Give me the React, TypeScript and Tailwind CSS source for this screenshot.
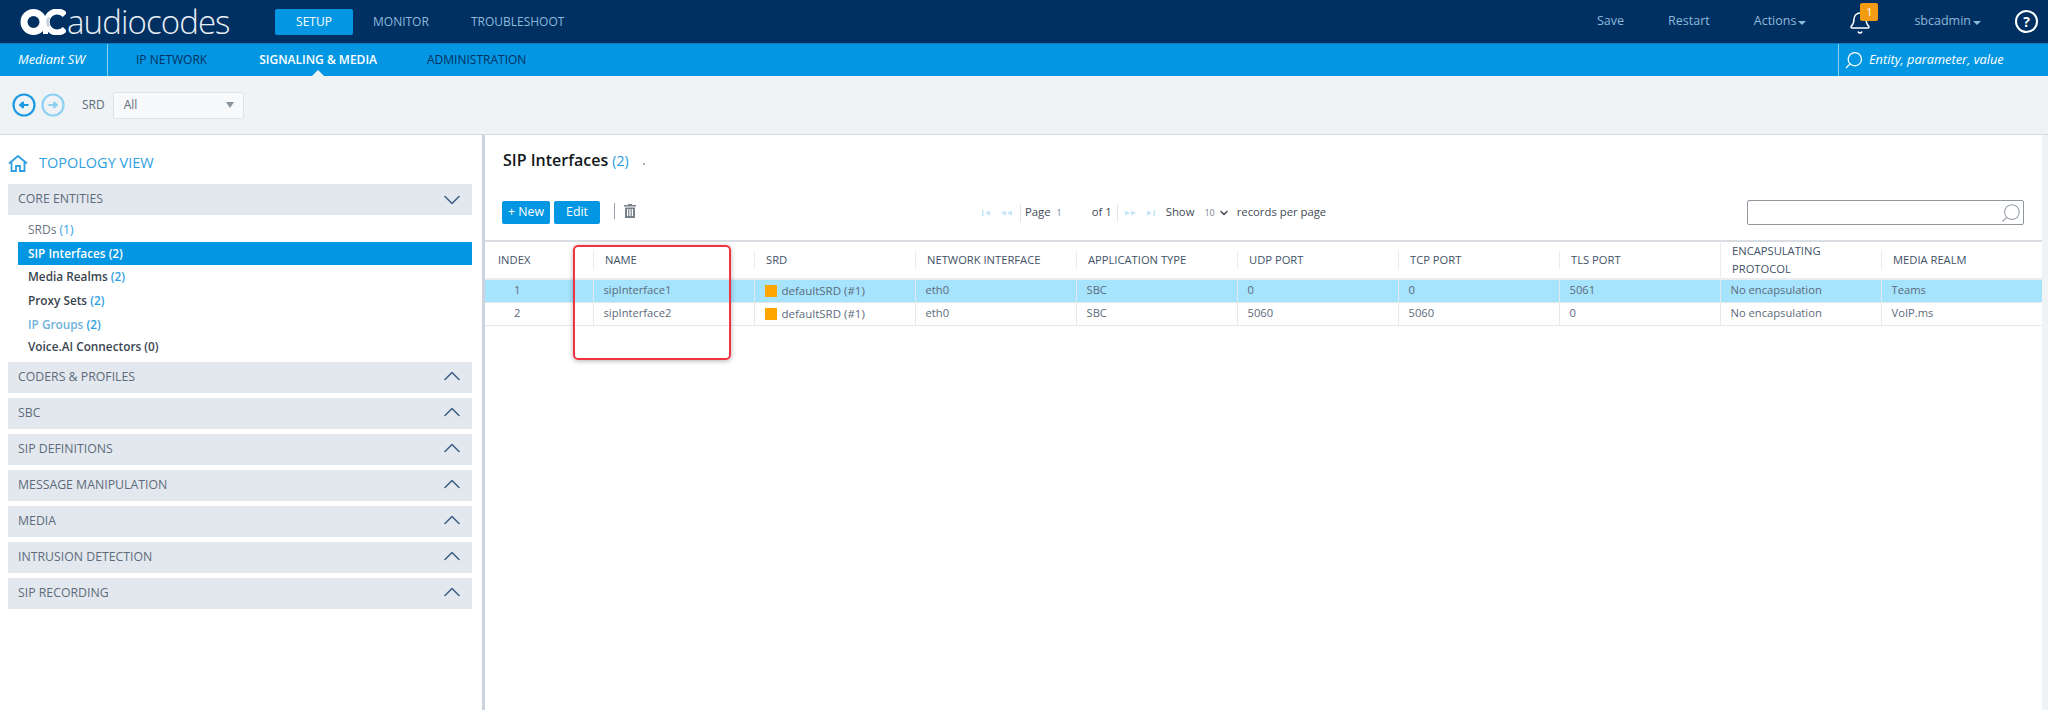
import React from 'react';
import { ChevronDown, ChevronUp, Search, Bell } from 'lucide-react';

const sections = ['CODERS & PROFILES', 'SBC', 'SIP DEFINITIONS', 'MESSAGE MANIPULATION', 'MEDIA', 'INTRUSION DETECTION', 'SIP RECORDING'];

const columns = [
  { label: 'INDEX', width: 'w-[108px]' },
  { label: 'NAME', width: 'w-[161px]' },
  { label: 'SRD', width: 'w-[161px]' },
  { label: 'NETWORK INTERFACE', width: 'w-[161px]' },
  { label: 'APPLICATION TYPE', width: 'w-[161px]' },
  { label: 'UDP PORT', width: 'w-[161px]' },
  { label: 'TCP PORT', width: 'w-[161px]' },
  { label: 'TLS PORT', width: 'w-[161px]' },
  { label: 'ENCAPSULATING PROTOCOL', width: 'w-[161px]' },
  { label: 'MEDIA REALM', width: 'w-[161px]' },
];

const rows = [
  { index: '1', name: 'sipInterface1', udp: '0', tcp: '0', tls: '5061', realm: 'Teams' },
  { index: '2', name: 'sipInterface2', udp: '5060', tcp: '5060', tls: '0', realm: 'VoIP.ms' },
];

const SectionBar = ({ label, open }: { label: string; open?: boolean }) => (
  <div className="h-[31px] ml-[8px] w-[464px] bg-[#e3e8ef] flex items-center justify-between pl-[10px] pr-[6px] text-[12.3px] text-[#5d6b7a]">
    <span>{label}</span>
    {open ? (
      <ChevronDown className="w-[28px] h-[28px] text-[#3f6286]" strokeWidth={1.4} />
    ) : (
      <ChevronUp className="w-[28px] h-[28px] text-[#3f6286] -mt-[3px]" strokeWidth={1.4} />
    )}
  </div>
);

const NavItem = ({ label, count, tone, countTone }: { label: string; count: string; tone: string; countTone?: string }) => (
  <div className={`h-[24px] pl-[28px] flex items-center text-[11.8px] ${tone}`}>
    {label}&nbsp;<span className={countTone ?? 'text-[#2f9fe0]'}>{count}</span>
  </div>
);

const Pager = ({ flip }: { flip?: boolean }) => (
  <svg width="30" height="8" viewBox="0 0 30 8" className={`text-[#c3e5f8] ${flip ? 'rotate-180' : ''}`} fill="currentColor">
    <rect x="0" y="1" width="1.5" height="6" />
    <path d="M8 1.5v5L3 4zM24 1.5v5L19 4zM30 1.5v5L25 4z" />
  </svg>
);

const Logo = () => (
  <div className="flex items-center w-[208px] h-[30px]">
    <svg width="46" height="26" viewBox="0 0 46 26" className="shrink-0">
      <circle cx="13.5" cy="13" r="9.5" fill="none" stroke="#fff" strokeWidth="7" />
      <rect x="23" y="13" width="5" height="12" fill="#fff" />
      <path d="M45 6A10.5 10.5 0 1 0 45 20" fill="none" stroke="#fff" strokeWidth="6" />
      <path d="M29 8.5A8 8 0 0 0 29 17.5" fill="none" stroke="#c4cfdb" strokeWidth="2.5" />
    </svg>
    <span className="ml-[1px] text-[33px] font-light text-[#e8eef4] leading-none tracking-[-0.9px]">audiocodes</span>
  </div>
);

export default function App() {
  return (
    <div className="w-[2048px] h-[710px] overflow-hidden flex flex-col bg-white font-['Open_Sans',sans-serif]">
      {/* top bar */}
      <div className="h-[43px] bg-[#003062] flex items-center pl-[20px] text-[12px] text-[#8db9da] shrink-0">
        <Logo />
        <div className="ml-[47px] w-[78px] h-[26px] rounded-[2px] bg-[#0397e3] text-white flex items-center justify-center">SETUP</div>
        <span className="ml-[20px]">MONITOR</span>
        <span className="ml-[42px]">TROUBLESHOOT</span>
        <span className="ml-auto text-[12.5px]">Save</span>
        <span className="ml-[44px] text-[12.5px]">Restart</span>
        <span className="ml-[44px] flex items-center text-[12.5px]">
          Actions
          <span className="ml-[2px] mt-[2px] border-x-[4px] border-x-transparent border-t-[4px] border-t-[#8db9da]" />
        </span>
        <div className="relative ml-[42px] w-[24px] h-[24px] mt-[3px]">
          <Bell className="w-[24px] h-[24px] text-white" strokeWidth={1.5} />
          <span className="absolute -top-[8px] left-[12px] w-[18px] h-[18px] rounded-[2px] bg-[#f39c12] text-white text-[11px] flex items-center justify-center">1</span>
        </div>
        <span className="ml-[42px] flex items-center text-[12.5px]">
          sbcadmin
          <span className="ml-[2px] mt-[2px] border-x-[4px] border-x-transparent border-t-[4px] border-t-[#8db9da]" />
        </span>
        <div className="ml-[34px] mr-[10px] w-[23px] h-[23px] rounded-full border-2 border-white text-white font-bold text-[14px] flex items-center justify-center">?</div>
      </div>

      {/* sub nav */}
      <div className="h-[33px] bg-[#0397e3] border-t border-[#0a7fc4] flex items-stretch text-[12px] text-[#003062] shrink-0">
        <div className="w-[108px] pl-[18px] flex items-center italic text-[12.8px] text-white border-r border-[#8fd0f3]">Mediant SW</div>
        <span className="ml-[28px] flex items-center">IP NETWORK</span>
        <span className="ml-[52px] flex items-center font-semibold text-white relative">
          SIGNALING &amp; MEDIA
          <span className="absolute left-1/2 -translate-x-1/2 bottom-0 border-x-[6px] border-x-transparent border-b-[6px] border-b-[#eff3f6]" />
        </span>
        <span className="ml-[50px] flex items-center">ADMINISTRATION</span>
        <div className="ml-auto w-[210px] border-l border-[#8fd0f3] pl-[5px] flex items-center italic text-[12.8px] text-white">
          <Search className="w-[20px] h-[20px] -scale-x-100 mr-[5px]" strokeWidth={1.5} />
          Entity, parameter, value
        </div>
      </div>

      {/* toolbar */}
      <div className="h-[59px] bg-[#eff3f6] border-b border-[#d5dae0] flex items-center pl-[12px] text-[12px] text-[#5d6b7a] shrink-0">
        <svg width="24" height="24" viewBox="0 0 24 24" fill="none">
          <circle cx="12" cy="12" r="10.5" stroke="#1c9ae2" strokeWidth="2.2" />
          <path d="M16.5 12H11M11 9.5L8 12l3 2.5z" stroke="#1c9ae2" strokeWidth="2" fill="#1c9ae2" strokeLinejoin="round" />
        </svg>
        <svg width="24" height="24" viewBox="0 0 24 24" fill="none" className="ml-[5px]">
          <circle cx="12" cy="12" r="10.5" stroke="#8fd0f3" strokeWidth="2.2" />
          <path d="M7.5 12H13M13 9.5l3 2.5-3 2.5z" stroke="#8fd0f3" strokeWidth="2" fill="#8fd0f3" strokeLinejoin="round" />
        </svg>
        <span className="ml-[17px]">SRD</span>
        <div className="ml-[8px] w-[131px] h-[27px] bg-[#f8f9fb] border border-[#dfe3e8] rounded-[2px] pl-[10px] pr-[9px] flex items-center justify-between">
          All
          <span className="border-x-[4px] border-x-transparent border-t-[6px] border-t-[#8a949e]" />
        </div>
      </div>

      <div className="flex-1 flex min-h-0">
        {/* left menu */}
        <aside className="w-[482px] pr-[10px] shrink-0">
          <div className="h-[49px] pl-[8px] flex items-center text-[14.5px] text-[#2f9fe0]">
            <svg width="20" height="17" viewBox="0 0 20 17" fill="none" stroke="currentColor" strokeWidth="1.8" className="mt-[7px]">
              <path d="M1 8.5L10 1l9 7.5" />
              <path d="M3.5 7v9H8v-5h4v5h4.5V7" />
            </svg>
            <span className="ml-[11px] mt-[7px]">TOPOLOGY VIEW</span>
          </div>
          <SectionBar label="CORE ENTITIES" open />
          <div className="pt-[3px] pb-[3px] font-semibold">
            <div className="h-[24px] pl-[28px] flex items-center text-[12px] text-[#6b7480] font-normal">
              SRDs&nbsp;<span className="text-[#2f9fe0]">(1)</span>
            </div>
            <div className="h-[23px] ml-[18px] pl-[10px] bg-[#0397e3] text-white flex items-center text-[11.8px]">SIP Interfaces (2)</div>
            <NavItem label="Media Realms" count="(2)" tone="text-[#3a4450]" />
            <NavItem label="Proxy Sets" count="(2)" tone="text-[#3a4450]" />
            <NavItem label="IP Groups" count="(2)" tone="text-[#6fb3dc]" />
            <div className="-mt-[2px]">
              <NavItem label="Voice.AI Connectors" count="(0)" tone="text-[#3a4450]" countTone="text-[#3a4450]" />
            </div>
          </div>
          <div className="flex flex-col gap-[5px]">
            {sections.map((s) => (
              <SectionBar key={s} label={s} />
            ))}
          </div>
        </aside>
        <div className="w-[3px] bg-[#ccd3de] shrink-0" />

        {/* main panel */}
        <main className="flex-1 pr-[6px] bg-[#eff3f6] min-w-0">
          <div className="relative h-full bg-white text-[11.2px] text-[#5d6b7a]">
            <div className="h-[50px] pl-[18px] flex items-center text-[16px] font-semibold text-[#111820]">
              SIP Interfaces&nbsp;<span className="text-[#1c9ae2] text-[14px] font-normal">(2)</span>
              <span className="ml-[14px] mt-[8px] w-[2px] h-[2px] bg-[#a9b2bb]" />
            </div>
            <div className="h-[55px] flex items-center pl-[17px] pr-[18px]">
              <button className="w-[48px] h-[23px] rounded-[2px] bg-[#0397e3] text-white text-[12.3px]">+ New</button>
              <button className="ml-[4px] w-[46px] h-[23px] rounded-[2px] bg-[#0397e3] text-white text-[12.3px]">Edit</button>
              <span className="ml-[14px] w-px h-[16px] bg-[#9aa3ad] -mt-[4px]" />
              <svg width="12" height="14" viewBox="0 0 12 14" className="ml-[9px] -mt-[4px] text-[#77818c]" fill="currentColor">
                <path d="M4 0h4v1h4v1.5H0V1h4zM1 3.5h10V14H1zM3 5v7h1.2V5zm2.4 0v7h1.2V5zM7.800 5v7H9V5z" fillRule="evenodd" />
              </svg>
              <div className="ml-[346px] flex items-center text-[11.3px] text-[#3f4a56]">
                <Pager />
                <span className="ml-[8px] pl-[4px] h-[18px] flex items-center border-l border-[#e2e6ea]">Page</span>
                <span className="ml-[6px] text-[9px] text-[#7b8692]">1</span>
                <span className="ml-[30px]">of 1</span>
                <span className="ml-[5px] pl-[7px] h-[18px] flex items-center border-l border-[#e2e6ea]"><Pager flip /></span>
                <span className="ml-[11px]">Show</span>
                <span className="ml-[10px] text-[9px] text-[#7b8692]">10</span>
                <ChevronDown className="w-[12px] h-[12px] ml-[3px] text-[#3f4a56]" strokeWidth={3} />
                <span className="ml-[7px]">records per page</span>
              </div>
              <div className="ml-auto w-[277px] h-[25px] border border-[#8f979f] rounded-[2px] flex items-center justify-end pr-[1px]">
                <Search className="w-[22px] h-[22px] -scale-x-100 text-[#9aa3ad]" strokeWidth={1.2} />
              </div>
            </div>

            <table className="table-fixed w-full border-t-2 border-[#d9dde2] border-collapse">
              <thead>
                <tr className="h-[35px] border-b-2 border-[#ebeced]">
                  {columns.map((c, i) => (
                    <th key={c.label} className={`${c.width} p-0 font-normal text-left text-[#3f5266] text-[11.2px] leading-[18px]`}>
                      <div className={`min-h-[18px] pl-[11px] pr-[20px] ${i === 0 ? 'pl-[13px]' : 'border-l border-[#e9ecef]'}`}>{c.label}</div>
                    </th>
                  ))}
                </tr>
              </thead>
              <tbody>
                {rows.map((r, i) => (
                  <tr key={r.index} className={`h-[23px] border-b border-[#e6e9ec] ${i === 0 ? 'bg-[#a6e3fd]' : ''}`}>
                    <td className="p-0 pl-[29px]">{r.index}</td>
                    <td className="p-0 pl-[10px] border-l border-[#e6e9ec]">{r.name}</td>
                    <td className="p-0 pl-[10px] border-l border-[#e6e9ec]">
                      <span className="flex items-center text-[11.5px]">
                        <span className="w-[12px] h-[12px] bg-[#ffa500] mr-[5px]" />
                        defaultSRD (#1)
                      </span>
                    </td>
                    <td className="p-0 pl-[10px] border-l border-[#e6e9ec]">eth0</td>
                    <td className="p-0 pl-[10px] border-l border-[#e6e9ec]">SBC</td>
                    <td className="p-0 pl-[10px] border-l border-[#e6e9ec]">{r.udp}</td>
                    <td className="p-0 pl-[10px] border-l border-[#e6e9ec]">{r.tcp}</td>
                    <td className="p-0 pl-[10px] border-l border-[#e6e9ec]">{r.tls}</td>
                    <td className="p-0 pl-[10px] border-l border-[#e6e9ec]">No encapsulation</td>
                    <td className="p-0 pl-[10px] border-l border-[#e6e9ec]">{r.realm}</td>
                  </tr>
                ))}
              </tbody>
            </table>

            {/* red annotation from the screenshot */}
            <div className="absolute left-[88px] top-[110px] w-[158px] h-[115px] border-2 border-[#ef3340] rounded-[5px] shadow-[0_1px_5px_rgba(0,0,0,0.3)]" />
          </div>
        </main>
      </div>
    </div>
  );
}
